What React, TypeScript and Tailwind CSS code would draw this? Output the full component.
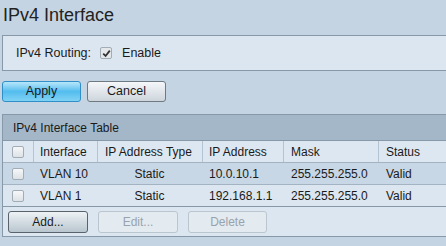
import React from "react";

function Box({ checked }: { checked?: boolean }) {
  return (
    <div
      className={`w-[12px] h-[12px] rounded-[2px] border border-[#a2acb5] flex items-center justify-center ${
        checked ? "bg-[#e4e8eb]" : "bg-gradient-to-b from-[#f6f7f8] to-[#dde2e6]"
      }`}
    >
      {checked && (
        <svg width="9" height="9" viewBox="0 0 9 9">
          <path d="M1.2 4.6 L3.6 7 L7.8 1.6" stroke="#333" strokeWidth="1.8" fill="none" />
        </svg>
      )}
    </div>
  );
}

const rows = [
  { iface: "VLAN 10", type: "Static", ip: "10.0.10.1", mask: "255.255.255.0", status: "Valid", bg: "bg-[#c8d7e6]" },
  { iface: "VLAN 1", type: "Static", ip: "192.168.1.1", mask: "255.255.255.0", status: "Valid", bg: "bg-[#dce6f0]" },
];

export default function App() {
  return (
    <div className="w-[446px] h-[246px] overflow-hidden bg-[#c4d4e3] font-['Liberation_Sans',Arial,sans-serif] text-[#1a1a1a]">
      <div className="h-[35px] pl-[3px] pt-[2px] text-[18px] leading-[26px] text-[#222]">IPv4 Interface</div>
      <div className="ml-[2px] h-[36px] border-y border-l border-[#8798a8] bg-[#dce6f0] flex items-center pl-[13px] text-[12.5px]">
        <span>IPv4 Routing:</span>
        <div className="ml-[9px]"><Box checked /></div>
        <span className="ml-[10px]">Enable</span>
      </div>
      <div className="mt-[10px] ml-[2px] flex gap-[6px] text-[12.5px]">
        <button className="w-[79px] h-[21px] rounded-[3px] border border-[#2f8fc6] bg-gradient-to-b from-[#b6e6fa] via-[#52bdee] to-[#7fd2f5] leading-[19px]">Apply</button>
        <button className="w-[79px] h-[21px] rounded-[3px] border border-[#6f7982] bg-gradient-to-b from-[#f5f7f9] to-[#cdd5dc] leading-[19px]">Cancel</button>
      </div>
      <div className="mt-[12px] ml-[2px] border-y border-l border-[#8798a8] text-[12px]">
        <div className="h-[25px] bg-[#a3b7c9] flex items-center pl-[10px]">IPv4 Interface Table</div>
        <div className="grid grid-cols-[30px_64px_105px_81px_95px_1fr] h-[22px] bg-[#dde7f1] border-t border-[#8798a8] items-stretch">
          <div className="flex items-center justify-center"><Box /></div>
          <div className="border-l border-[#b3c3d2] flex items-center pl-[6px]">Interface</div>
          <div className="border-l border-[#b3c3d2] flex items-center pl-[7px]">IP Address Type</div>
          <div className="border-l border-[#b3c3d2] flex items-center pl-[6px]">IP Address</div>
          <div className="border-l border-[#b3c3d2] flex items-center pl-[7px]">Mask</div>
          <div className="border-l border-[#b3c3d2] flex items-center pl-[7px]">Status</div>
        </div>
        {rows.map((r, i) => (
          <div key={i} className={`grid grid-cols-[30px_64px_105px_81px_95px_1fr] h-[22px] border-t border-[#a3b3c2] ${r.bg}`}>
            <div className="flex items-center justify-center"><Box /></div>
            <div className="flex items-center pl-[7px]">{r.iface}</div>
            <div className="flex items-center justify-center">{r.type}</div>
            <div className="flex items-center pl-[7px]">{r.ip}</div>
            <div className="flex items-center pl-[8px]">{r.mask}</div>
            <div className="flex items-center pl-[8px]">{r.status}</div>
          </div>
        ))}
        <div className="h-[30px] border-t border-[#8798a8] bg-[#dce6f0] flex items-center pl-[5px] gap-[10px]">
          <button className="w-[80px] h-[22px] rounded-[3px] border border-[#5a636b] bg-gradient-to-b from-[#eef2f5] to-[#b9c6cf] leading-[20px]">Add...</button>
          <button className="w-[80px] h-[22px] rounded-[3px] border border-[#bac5ce] bg-[#e3eaf0] text-[#98a3ad] leading-[20px]">Edit...</button>
          <button className="w-[79px] h-[22px] rounded-[3px] border border-[#bac5ce] bg-[#e3eaf0] text-[#98a3ad] leading-[20px]">Delete</button>
        </div>
      </div>
    </div>
  );
}
